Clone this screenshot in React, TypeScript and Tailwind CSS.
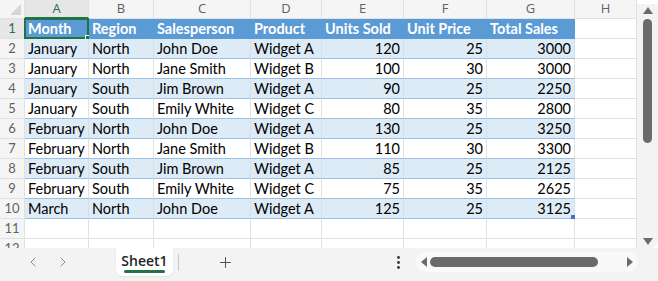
import { ChevronLeft, ChevronRight, Plus } from "lucide-react";

const cols = [
  { key: "A", w: "w-[64px]" },
  { key: "B", w: "w-[65px]" },
  { key: "C", w: "w-[97px]" },
  { key: "D", w: "w-[71px]" },
  { key: "E", w: "w-[82px]" },
  { key: "F", w: "w-[83px]" },
  { key: "G", w: "w-[88px]" },
  { key: "H", w: "w-[62px]" },
];

const header = ["Month", "Region", "Salesperson", "Product", "Units Sold", "Unit Price", "Total Sales"];

const rows: (string | number)[][] = [
  ["January", "North", "John Doe", "Widget A", 120, 25, 3000],
  ["January", "North", "Jane Smith", "Widget B", 100, 30, 3000],
  ["January", "South", "Jim Brown", "Widget A", 90, 25, 2250],
  ["January", "South", "Emily White", "Widget C", 80, 35, 2800],
  ["February", "North", "John Doe", "Widget A", 130, 25, 3250],
  ["February", "North", "Jane Smith", "Widget B", 110, 30, 3300],
  ["February", "South", "Jim Brown", "Widget A", 85, 25, 2125],
  ["February", "South", "Emily White", "Widget C", 75, 35, 2625],
  ["March", "North", "John Doe", "Widget A", 125, 25, 3125],
];

function RowHead({ n, active }: { n: number; active?: boolean }) {
  return (
    <div
      className={
        "w-[25px] shrink-0 flex items-center justify-center border-r border-b border-[#e1e1e1] text-[13px] " +
        (active ? "bg-[#e6e6e6] text-[#217346] border-r-[#217346]" : "bg-[#f5f5f5] text-[#616161]")
      }
    >
      {n}
    </div>
  );
}

function Cell({
  w,
  children,
  right,
  bg,
  line,
  bold,
}: {
  w: string;
  children?: React.ReactNode;
  right?: boolean;
  bg?: string;
  line?: string;
  bold?: boolean;
}) {
  return (
    <div
      className={
        w +
        " shrink-0 flex items-center px-[3px] border-r border-b whitespace-nowrap overflow-visible " +
        (right ? "justify-end " : "") +
        (bg ?? "bg-white") +
        " " +
        (line ?? "border-[#e1e1e1]") +
        (bold ? " font-bold text-white" : " text-black")
      }
    >
      {children}
    </div>
  );
}

export default function App() {
  return (
    <div className="w-[658px] h-[281px] bg-[#f3f3f3] flex flex-col overflow-hidden font-['Lato',sans-serif] text-[14.5px]">
      <div className="flex h-[248px]">
        <div className="w-[637px] flex flex-col bg-white overflow-hidden">
          {/* column letters */}
          <div className="flex h-[19px] shrink-0 font-['Open_Sans',sans-serif] text-[13px]">
            <div className="w-[25px] shrink-0 bg-[#f5f5f5] border-r border-b border-[#e1e1e1] relative">
              <svg className="absolute right-[3px] bottom-[3px]" width="11" height="11" viewBox="0 0 11 11">
                <path d="M11 0 L11 11 L0 11 Z" fill="#d6d6d6" />
              </svg>
            </div>
            {cols.map((c) => (
              <div
                key={c.key}
                className={
                  c.w +
                  " shrink-0 flex items-center justify-center border-r border-b " +
                  (c.key === "A"
                    ? "bg-[#e6e6e6] text-[#217346] border-r-[#e1e1e1] border-b-2 border-b-[#217346]"
                    : "bg-[#f5f5f5] text-[#616161] border-[#e1e1e1]")
                }
              >
                {c.key}
              </div>
            ))}
          </div>
          {/* row 1 */}
          <div className="flex h-[20px] shrink-0">
            <RowHead n={1} active />
            {header.map((h, i) => (
              <div key={h} className="relative flex">
                <Cell w={cols[i].w} bg="bg-[#5b9bd5]" line="border-[#5b9bd5]" bold>
                  {h}
                </Cell>
                {i === 0 && (
                  <div className="absolute -left-px -top-px w-[65px] h-[21px] border-2 border-[#217346]">
                    <div className="absolute -right-[4px] -bottom-[4px] w-[6px] h-[6px] bg-[#217346] border border-white" />
                  </div>
                )}
              </div>
            ))}
            <Cell w={cols[7].w} />
          </div>
          {rows.map((r, ri) => {
            const band = ri % 2 === 0;
            return (
              <div key={ri} className="flex h-[20px] shrink-0">
                <RowHead n={ri + 2} />
                {r.map((v, ci) => (
                  <div key={ci} className="relative flex">
                    <Cell
                      w={cols[ci].w}
                      right={typeof v === "number"}
                      bg={band ? "bg-[#ddebf7]" : "bg-white"}
                      line={
                        (band ? "border-r-[#d3dfea]" : "border-r-[#e1e1e1]") + " border-b-[#9bc2e6]"
                      }
                    >
                      {v}
                    </Cell>
                    {ri === rows.length - 1 && ci === 6 && (
                      <div className="absolute right-0 bottom-0 w-[4px] h-[4px] bg-[#4472c4]" />
                    )}
                  </div>
                ))}
                <Cell w={cols[7].w} />
              </div>
            );
          })}
          {[11, 12].map((n) => (
            <div key={n} className="flex h-[20px] shrink-0">
              <RowHead n={n} />
              {cols.map((c) => (
                <Cell key={c.key} w={c.w} />
              ))}
            </div>
          ))}
        </div>
        {/* vertical scrollbar */}
        <div className="w-[21px] bg-white flex flex-col items-center pt-[4px]">
          <div className="w-[21px] h-[244px] bg-[#f3f3f3] rounded-br-[8px] flex flex-col items-center pt-[3px]">
            <svg width="10" height="7" viewBox="0 0 10 7">
              <path d="M5 0 L10 7 L0 7 Z" fill="#6b6b6b" />
            </svg>
            <div className="w-[9px] h-[124px] mt-[5px] rounded-full bg-[#6b6b6b]" />
            <div className="flex-1" />
            <svg width="10" height="7" viewBox="0 0 10 7" className="mb-[3px]">
              <path d="M0 0 L10 0 L5 7 Z" fill="#6b6b6b" />
            </svg>
          </div>
        </div>
      </div>
      {/* bottom bar */}
      <div className="flex-1 flex items-start font-['Open_Sans',sans-serif]">
        <div className="flex items-center h-[28px] gap-[14px] pl-[25px] w-[116px] text-[#8a8a8a]">
          <ChevronLeft size={16} strokeWidth={1.5} />
          <ChevronRight size={16} strokeWidth={1.5} />
        </div>
        <div className="w-[57px] h-[28px] bg-white rounded-b-[6px] flex flex-col items-center justify-center shadow-[0_1px_2px_rgba(0,0,0,0.08)]">
          <span className="text-[14px] font-semibold text-[#242424] leading-[17px]">Sheet1</span>
          <div className="w-[41px] h-[3px] bg-[#217346] rounded-full mt-[1px]" />
        </div>
        <div className="w-px h-[17px] bg-[#c8c8c8] ml-[5px] mt-[6px]" />
        <div className="w-[92px] h-[28px] flex items-center justify-center text-[#424242]">
          <Plus size={17} strokeWidth={1.3} />
        </div>
        <div className="flex-1" />
        <div className="w-[10px] h-[28px] flex items-center justify-center mr-[12px]">
          <svg width="3" height="13" viewBox="0 0 3 13">
            <circle cx="1.5" cy="1.5" r="1.4" fill="#333" />
            <circle cx="1.5" cy="6.5" r="1.4" fill="#333" />
            <circle cx="1.5" cy="11.5" r="1.4" fill="#333" />
          </svg>
        </div>
        <div className="w-[223px] h-[20px] mt-[4px] mr-[20px] rounded-full bg-[#f9f9f9] flex items-center pl-[6px] pr-[5px]">
          <svg width="6" height="10" viewBox="0 0 6 10">
            <path d="M0 5 L6 0 L6 10 Z" fill="#6b6b6b" />
          </svg>
          <div className="ml-[3px] w-[168px] h-[10px] rounded-full bg-[#6b6b6b]" />
          <div className="flex-1" />
          <svg width="6" height="10" viewBox="0 0 6 10">
            <path d="M0 0 L6 5 L0 10 Z" fill="#6b6b6b" />
          </svg>
        </div>
      </div>
    </div>
  );
}
